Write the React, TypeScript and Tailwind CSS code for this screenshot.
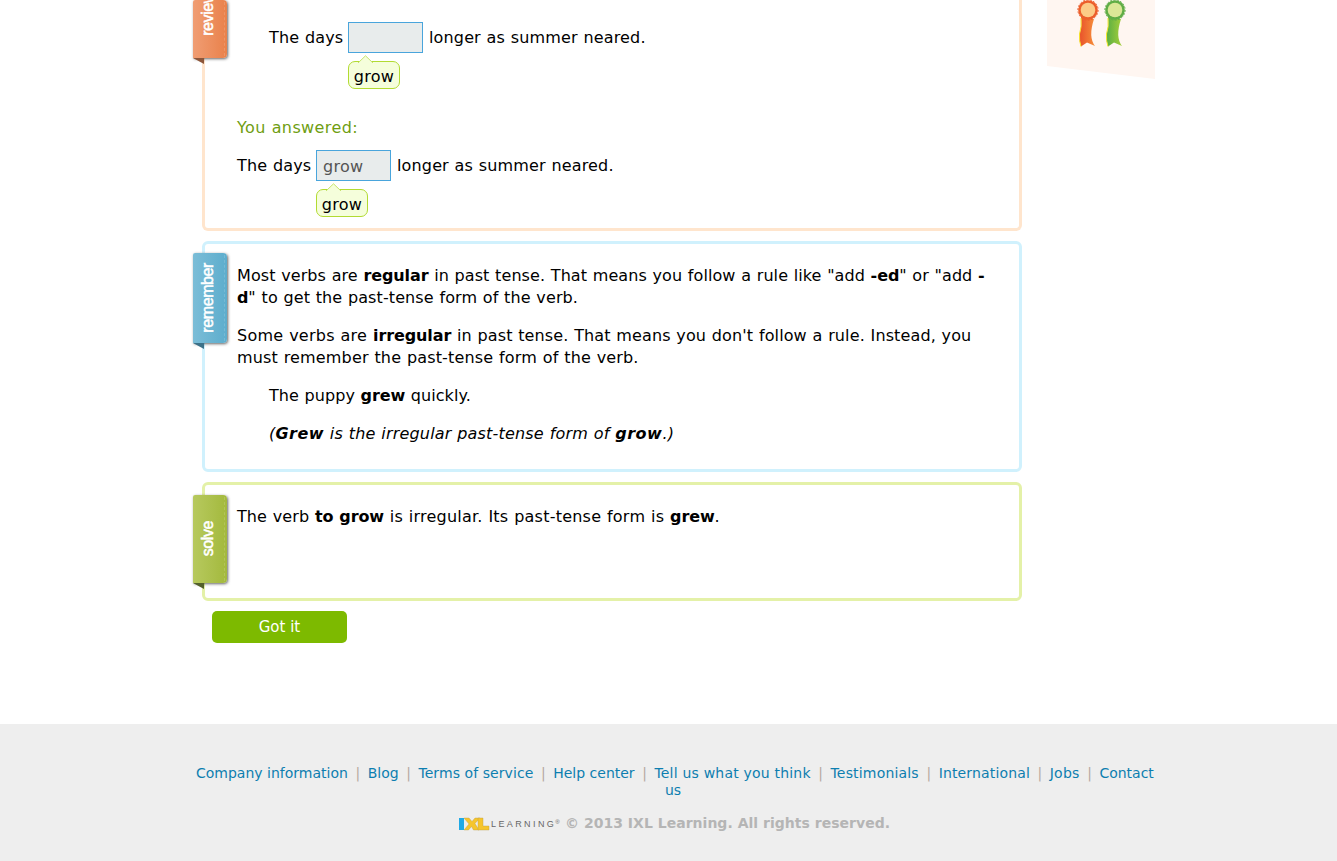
import React from 'react';

interface TabProps {
  label: string;
  className: string;
  foldClassName: string;
}

function RibbonTab({ label, className, foldClassName }: TabProps) {
  return (
    <div className="absolute left-[-12px] w-[35px]">
      <div
        className={`relative flex w-[34px] items-center justify-center rounded-r-[4px] rounded-tl-[2px] shadow-[1px_1px_3px_rgba(0,0,0,0.6)] ${className}`}
      >
        <div className="absolute inset-y-[2px] right-[2px] w-px border-r border-dashed border-white/15" />
        <span className="mr-[4px] -ml-[1px] rotate-180 text-[16px] leading-[20px] tracking-[-0.4px] text-white [-webkit-text-stroke:0.5px_white] [writing-mode:vertical-rl] font-['Liberation_Sans',sans-serif]">
          {label}
        </span>
      </div>
      <svg className={`relative block h-[6px] w-[11px] ${foldClassName}`} viewBox="0 0 11 6">
        <path d="M0 0H11V6Z" fill="currentColor" />
      </svg>
    </div>
  );
}

function AnswerBlank({ value, answer }: { value?: string; answer: string }) {
  return (
    <span className="relative mr-[6px] ml-[5px] block h-[31px] w-[75px] border border-[#49a5dc] bg-[#e8ecec] pl-[6px] leading-[31px] tracking-[0.25px] text-[#555]">
      {value}
      <span className="absolute top-[38px] left-[-1px] flex h-[28px] w-[52px] items-center justify-center rounded-[7px] border border-[#b2db32] bg-[#f5fedb] pt-[2px] text-black">
        <svg className="absolute top-[-7px] left-[9px] h-[8px] w-[15px]" viewBox="0 0 15 8">
          <path d="M0 8L7.5 .8L15 8" fill="#f5fedb" stroke="#c5e46c" />
        </svg>
        {answer}
      </span>
    </span>
  );
}

function Ribbon({ id, className, ring, center, light, dark }: {
  id: string;
  className: string;
  ring: string;
  center: string;
  light: string;
  dark: string;
}) {
  return (
    <svg className={`absolute top-[-3px] h-[52px] w-[24px] ${className}`} viewBox="0 0 24 52">
      <defs>
        <linearGradient id={id}>
          <stop offset="0" stopColor={dark} />
          <stop offset="1" stopColor={light} />
        </linearGradient>
      </defs>
      <path d="M5 20Q6 30 3.5 37Q3 44 5 49.5L11 45.5L19 49Q12 40 18 22Z" fill={`url(#${id})`} />
      <path d="M5 21Q6 30 3.5 37Q3 44 5 49.5" fill="none" stroke="#f5e52c" />
      <circle cx="12" cy="13" r="9.8" fill={ring} />
      <circle cx="12" cy="13" r="10.1" fill="none" stroke={ring} strokeWidth="1" strokeDasharray="2 1.5" />
      <circle cx="12" cy="13" r="7.3" fill={center} />
    </svg>
  );
}

const footerLinks = [
  { label: 'Company information', className: '' },
  { label: 'Blog', className: '' },
  { label: 'Terms of service', className: 'tracking-[0.08px]' },
  { label: 'Help center', className: '' },
  { label: 'Tell us what you think', className: 'tracking-[0.2px]' },
  { label: 'Testimonials', className: 'tracking-[0.18px]' },
  { label: 'International', className: 'tracking-[0.15px]' },
  { label: 'Jobs', className: 'tracking-[0.25px]' },
  { label: 'Contact', className: '' },
];

export default function App() {
  return (
    <div className="h-[861px] w-[1337px] overflow-hidden bg-white font-['DejaVu_Sans',Verdana,sans-serif] text-[16px] leading-[22px] text-black">
      <main className="flex h-[724px] pl-[202px]">
        <div className="w-[820px] [word-spacing:0.5px] [&_b]:tracking-[-0.1px]">
          {/* review */}
          <section className="relative h-[231px] rounded-b-[6px] border-3 border-t-0 border-[#ffe5cd] pt-[22px] pl-[32px]">
            <div className="absolute top-0 left-0">
              <RibbonTab
                label="review"
                className="h-[58px] bg-linear-to-r from-[#f09d73] to-[#e9814a] pb-[31px]"
                foldClassName="text-[#8d563a]"
              />
            </div>
            <div className="flex h-[31px] items-center pl-[32px] tracking-[0.15px] whitespace-nowrap">
              <span className="w-[74px]">The days</span>
              <AnswerBlank answer="grow" />
              longer as summer neared.
            </div>
            <h3 className="mt-[64px] tracking-[0.38px] text-[#6f9e12]">You answered:</h3>
            <div className="mt-[11px] flex h-[31px] items-center tracking-[0.15px] whitespace-nowrap">
              <span className="w-[74px]">The days</span>
              <AnswerBlank value="grow" answer="grow" />
              longer as summer neared.
            </div>
          </section>

          {/* remember */}
          <section className="relative mt-[10px] h-[231px] rounded-[6px] border-3 border-[#d0f1fd] pt-[21px] pl-[32px] whitespace-nowrap">
            <div className="absolute top-[9px] left-0">
              <RibbonTab
                label="remember"
                className="h-[90px] bg-linear-to-r from-[#7bbdd7] to-[#5dadcd]"
                foldClassName="text-[#3c7188]"
              />
            </div>
            <p>
              <span className="block tracking-[0.08px]">Most verbs are <b>regular</b> in past tense. That means you follow a rule like "add <b>-ed</b>" or "add <b>-</b></span>
              <span className="block tracking-[0.1px]"><b>d</b>" to get the past-tense form of the verb.</span>
            </p>
            <p className="mt-[16px]">
              <span className="block tracking-[0.12px]"><span className="tracking-[0.24px]">Some verbs are </span><b>irregular</b> in past tense. That means you don't follow a rule. Instead, you</span>
              <span className="block tracking-[0.16px]">must remember the past-tense form of the verb.</span>
            </p>
            <p className="mt-[16px] pl-[32px] tracking-[0.06px]">The puppy <b>grew</b> quickly.</p>
            <p className="mt-[16px] pl-[32px] tracking-[0.18px] italic [&_b]:tracking-[0.5px]!">(<b>Grew</b> is the irregular past-tense form of <b>grow</b>.)</p>
          </section>

          {/* solve */}
          <section className="relative mt-[10px] h-[119px] rounded-[6px] border-3 border-[#e4f1a8] pt-[21px] pl-[32px] tracking-[0.22px] whitespace-nowrap">
            <div className="absolute top-[10px] left-0">
              <RibbonTab
                label="solve"
                className="h-[88px] bg-linear-to-r from-[#b7c95e] to-[#a3b93c]"
                foldClassName="text-[#53602b]"
              />
            </div>
            <p><span className="tracking-[0.1px]">The verb </span><b>to grow</b> is irregular. Its past-tense form is <b>grew</b>.</p>
          </section>

          <button className="mt-[10px] ml-[10px] block h-[32px] w-[135px] rounded-[5px] bg-[#7dba00] text-[15px] text-white">
            Got it
          </button>
        </div>

        {/* awards */}
        <aside className="relative ml-[25px] h-[79px] w-[108px] bg-[#fff6f1] [clip-path:polygon(0_0,100%_0,100%_100%,0_66px)]">
          <Ribbon id="orange" className="left-[29px]" ring="#ec5e2b" center="#fccb87" dark="#e9512b" light="#f6903a" />
          <Ribbon id="green" className="left-[56px]" ring="#60ad46" center="#dbe797" dark="#58ad43" light="#a6cf3b" />
        </aside>
      </main>

      <footer className="h-[137px] bg-[#eee] pt-[41px]">
        <nav className="flex items-center justify-between pr-[183px] pl-[196px] text-[14px] leading-[17px] whitespace-nowrap text-[#0d7eb0]">
          {footerLinks.map((link, i) => (
            <React.Fragment key={link.label}>
              {i > 0 && <span className="text-[#b5a8a0]">|</span>}
              <a className={link.className}>{link.label}</a>
            </React.Fragment>
          ))}
        </nav>
        <div className="pl-[665px] text-[14px] leading-[17px] text-[#0d7eb0]">us</div>
        <div className="mt-[14px] flex h-[20px] items-center pl-[458px] whitespace-nowrap text-[#b5b5b5]">
          <svg className="mt-[2px] h-[14px] w-[32px] shrink-0" viewBox="0 0 32 14">
            <path d="M1 1H6V13H1Z" fill="#20a9e5" />
            <path d="M6 1H11L14 4.5L17 1H22L17 6.5L21 13H15.5L13.5 9.5L10.5 13H6L11 7Z" fill="#f6c52d" stroke="#bd9c45" strokeWidth=".4" />
            <path d="M20 1H25V9H31V13H20Z" fill="#f6c52d" stroke="#bd9c45" strokeWidth=".4" />
          </svg>
          <span className="mt-[2px] ml-px w-[74px] font-['Liberation_Sans',sans-serif] text-[9px] tracking-[2.4px] text-[#666]">
            LEARNING<sup className="-ml-px text-[6px]">®</sup>
          </span>
          <span className="text-[14px] font-bold tracking-[0.02px]">© 2013 IXL Learning. All rights reserved.</span>
        </div>
      </footer>
    </div>
  );
}
